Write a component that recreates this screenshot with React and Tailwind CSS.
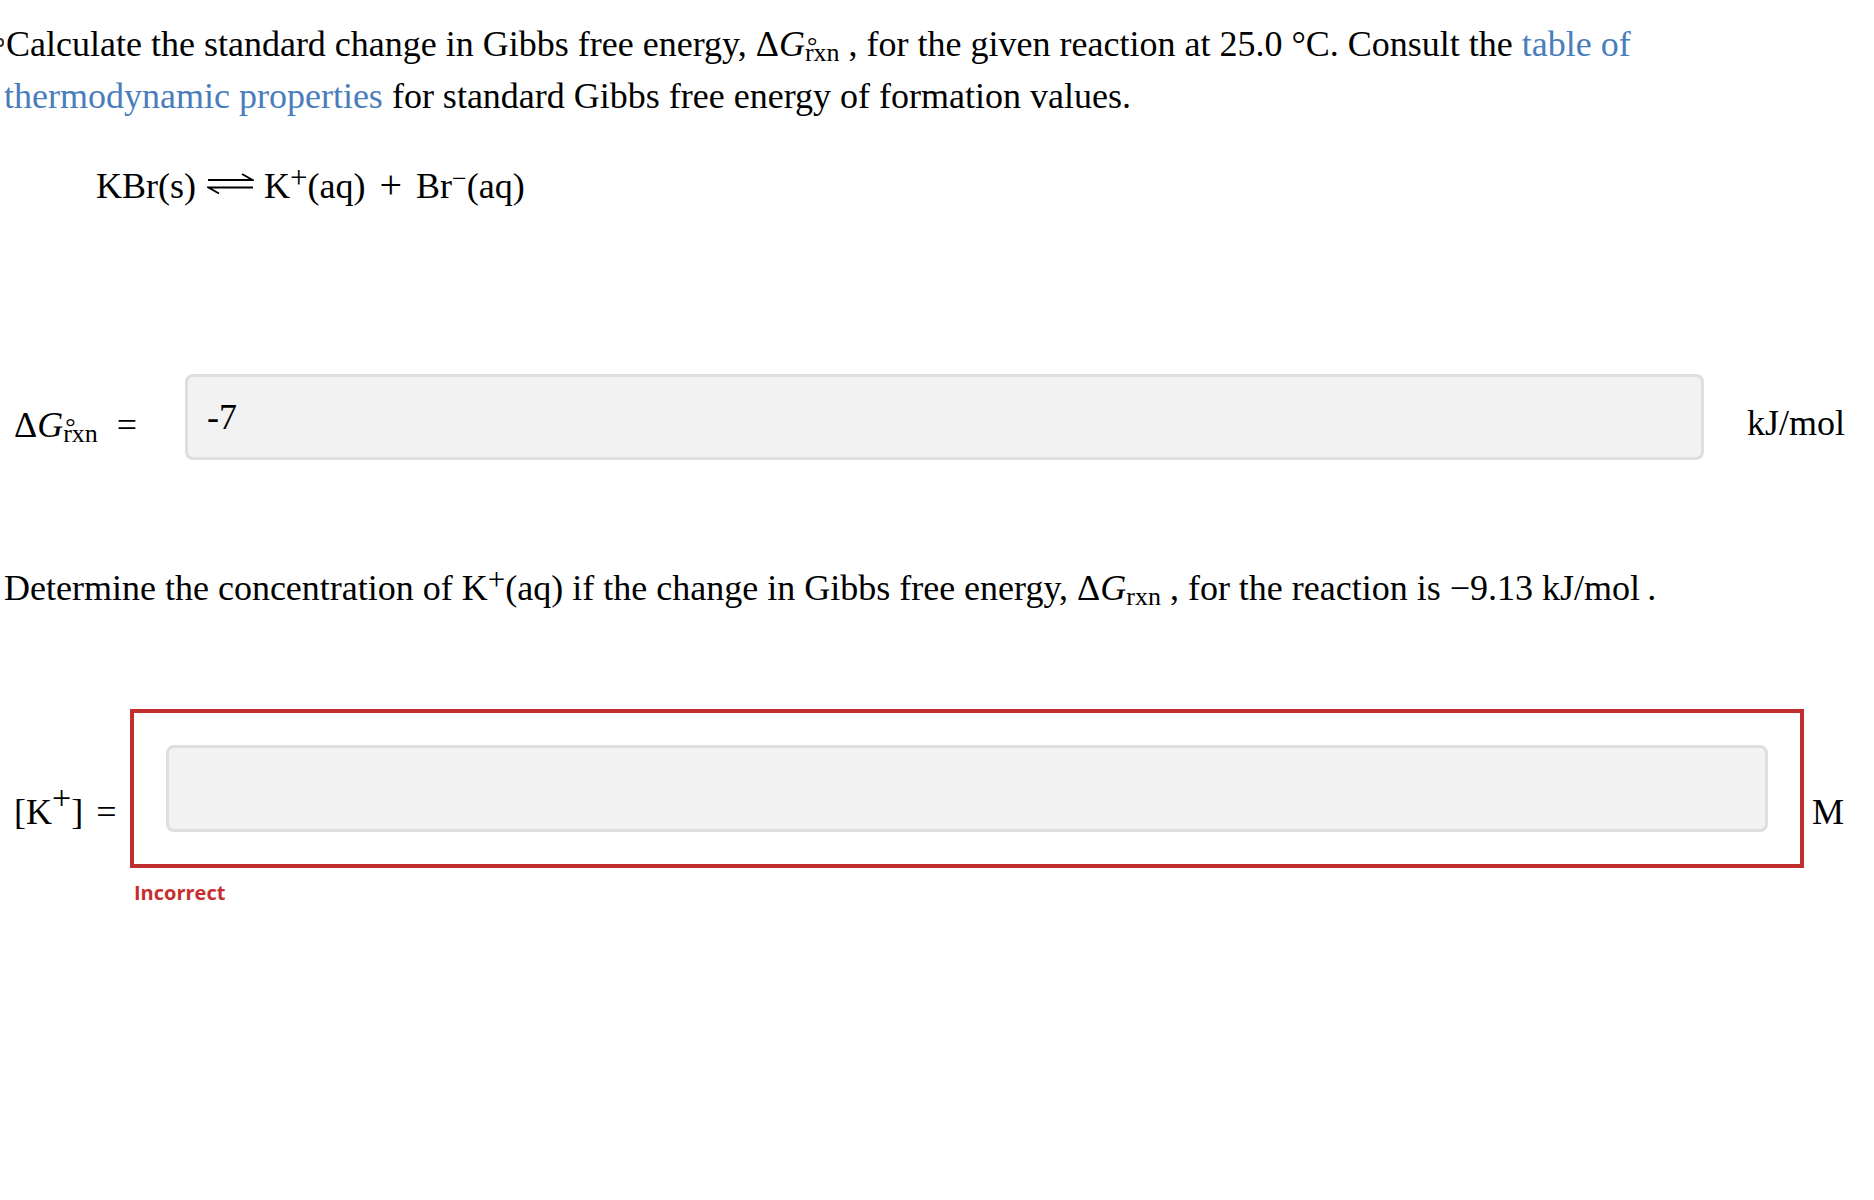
import React from "react";

// superscript charge (+ / −)
const Sup = ({ children, big, minus }) => {
  if (big) return <span className="relative -top-[15px] text-[34px] leading-none">{children}</span>;
  if (minus) return <span className="relative -top-[11px] text-[26px] leading-none">{children}</span>;
  return <span className="relative -top-[10px] text-[31px] leading-none">{children}</span>;
};

// ΔG°rxn with the stacked degree / subscript
const DeltaG = ({ degree }) => (
  <span className="whitespace-nowrap">
    Δ<i>G</i>
    {degree && (
      <span className="relative -top-[2px] left-[2px] inline-block w-0 text-[26px] leading-none">°</span>
    )}
    <span className="relative top-[5px] text-[26px] leading-none">rxn</span>
  </span>
);

const EqArrow = () => (
  <svg
    width="47"
    height="22"
    viewBox="0 0 47 22"
    className="ml-[11px] mr-[10px] inline-block align-[3px]"
  >
    <path d="M1 7H45.5L35 1" stroke="#000" strokeWidth="1.8" fill="none" />
    <path d="M46 14.5H1.5L12 20.5" stroke="#000" strokeWidth="1.8" fill="none" />
  </svg>
);

export default function App() {
  return (
    <div className="min-h-screen bg-white pl-[4px] pt-[18px] text-[36px] text-black font-['Liberation_Serif','Times_New_Roman',serif]">
      <p className="leading-[52px]">
        <span className="mr-[2px] -ml-[8px] inline-block h-[9px] w-[8px] rounded-full border-[2px] border-[#333] align-[9px]" />
        Calculate the standard change in Gibbs free energy, <DeltaG degree /> ,
        for the given reaction at 25.0 °C. Consult the{" "}
        <a href="#" className="text-[#4a7dbb]">
          table of
          <br />
          thermodynamic properties
        </a>{" "}
        for standard Gibbs free energy of formation values.
      </p>

      <div className="mt-[38px] pl-[92px] leading-[52px] whitespace-nowrap">
        KBr(s)
        <EqArrow />
        K<Sup>+</Sup>(aq)
        <span className="mx-[14px] text-[40px] leading-none">+</span>
        Br<Sup minus>−</Sup>(aq)
      </div>

      {/* first answer row */}
      <div className="mt-[162px] flex items-start">
        <div className="w-[181px] shrink-0 pl-[10px] pt-[33px] leading-none whitespace-nowrap">
          <DeltaG degree />
          <span className="ml-[19px]">=</span>
        </div>
        <input
          readOnly
          value="-7"
          className="h-[86px] min-w-0 flex-1 rounded-[8px] border-[3px] border-[#dedede] bg-[#f2f2f2] px-[19px] text-[36px] leading-none outline-none"
        />
        <div className="shrink-0 pl-[43px] pr-[29px] pt-[31px] leading-none whitespace-nowrap">
          kJ/mol
        </div>
      </div>

      <p className="mt-[102px] leading-[52px]">
        Determine the concentration of K<Sup>+</Sup>(aq) if the change in Gibbs
        free energy, <DeltaG /> , for the reaction is −9.13 kJ/mol{"\u2009"}.
      </p>

      {/* second answer row */}
      <div className="mt-[95px] flex items-start">
        <div className="w-[126px] shrink-0 pl-[10px] pt-[85px] leading-none whitespace-nowrap">
          [K<Sup big>+</Sup>]<span className="ml-[13px]">=</span>
        </div>
        <div className="min-w-0 flex-1">
          <div className="border-[4px] border-[#c02f2d] p-[32px]">
            <input
              readOnly
              value=""
              className="block h-[87px] w-full rounded-[8px] border-[3px] border-[#dedede] bg-[#f2f2f2] px-[19px] text-[36px] leading-none outline-none"
            />
          </div>
          <div className="mt-[15px] pl-[4px] text-[20px] font-bold leading-none text-[#c62f2f] font-['Open_Sans',sans-serif]">
            Incorrect
          </div>
        </div>
        <div className="shrink-0 pl-[8px] pr-[30px] pt-[85px] leading-none">
          M
        </div>
      </div>
    </div>
  );
}
